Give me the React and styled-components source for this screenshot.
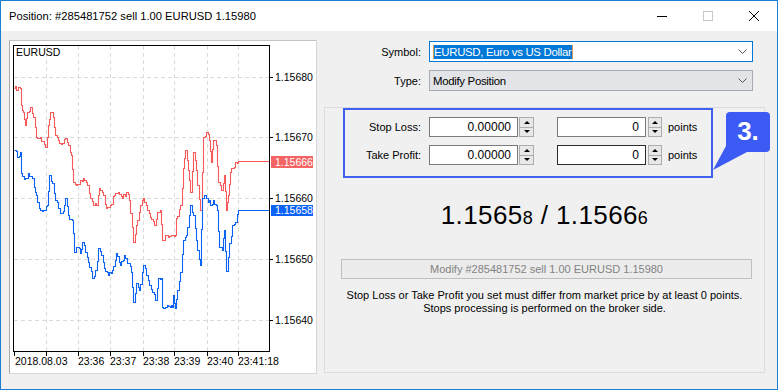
import React from "react";
import styled, { createGlobalStyle } from "styled-components";

const GlobalStyle = createGlobalStyle`
  html, body {
    margin: 0;
    padding: 0;
    background: #fff;
  }
  body {
    font-family: "Liberation Sans", Arial, sans-serif;
    font-size: 11px;
    color: #000;
    overflow: hidden;
  }
  * {
    box-sizing: border-box;
  }
`;

const Window = styled.div`
  width: 778px;
  height: 390px;
  border: 1px solid #1a7fd4;
  background: #f0f0f0;
  display: flex;
  flex-direction: column;
`;

const TitleBar = styled.div`
  height: 30px;
  background: #fff;
  display: flex;
  align-items: center;
  flex-shrink: 0;
`;

const Caption = styled.span`
  padding-left: 8px;
  font-size: 11.2px;
  color: #000;
`;

const CaptionButtons = styled.div`
  margin-left: auto;
  display: flex;
  height: 100%;
`;

const CaptionButton = styled.div`
  width: 46px;
  height: 30px;
  display: flex;
  align-items: center;
  justify-content: center;
`;

const Body = styled.div`
  flex: 1;
  display: flex;
  padding: 9px 12px 0 8px;
`;

const ChartPanel = styled.div`
  width: 308px;
  height: 334px;
  background: #fff;
  border: 1px solid #d6d6d6;
  border-left-color: #a8a8a8;
  border-top-color: #c4c4c4;
`;

const ChartSvg = styled.svg`
  display: block;
  text {
    font-family: "Liberation Sans", Arial, sans-serif;
    font-size: 10.5px;
  }
`;

const RightCol = styled.div`
  width: 441px;
  margin-left: 7px;
  display: flex;
  flex-direction: column;
`;

const TopRow = styled.div`
  display: flex;
  align-items: center;
  height: 21px;
  margin-top: ${(p) => p.$mt}px;
`;

const RowLabel = styled.div`
  width: ${(p) => p.$w}px;
  margin-right: 8px;
  text-align: right;
  flex-shrink: 0;
`;

const Combo = styled.div`
  width: 324px;
  height: 21px;
  display: flex;
  align-items: center;
  padding-left: ${(p) => (p.$focused ? 4 : 3)}px;
  padding-right: 5px;
  border: 1px solid ${(p) => (p.$focused ? "#0078d7" : "#a4abb3")};
  background: ${(p) => (p.$focused ? "#fff" : "#e2e4e7")};
  font-size: 11.4px;
  letter-spacing: -0.3px;
`;

const Selected = styled.span`
  background: #0078d7;
  color: #fff;
  line-height: 14px;
  padding: 0 1px 0 0;
  box-shadow: -1px 0 0 #d99a55, 1px 0 0 #d99a55;
`;

const Chevron = styled.svg`
  margin-left: auto;
  display: block;
`;

const Group = styled.div`
  position: relative;
  margin-top: 16px;
  height: 266px;
  border: 1px solid #dcdcdc;
  padding-top: 9px;
  display: flex;
  flex-direction: column;
`;

const FieldRow = styled.div`
  display: flex;
  align-items: center;
  height: 20px;
  margin-bottom: 8px;
`;

const TextInput = styled.div`
  width: 89px;
  height: 20px;
  margin-left: ${(p) => p.$ml || 0}px;
  border: 1px solid ${(p) => (p.$focused ? "#2a2a2a" : "#7a7a7a")};
  background: #fff;
  display: flex;
  align-items: center;
  justify-content: flex-end;
  padding-right: 6px;
  font-size: 12px;
`;

const Spin = styled.div`
  width: ${(p) => p.$w}px;
  height: 20px;
  margin-left: ${(p) => p.$ml}px;
  border: 1px solid #adadad;
  background: #e8e8e8;
  display: flex;
  flex-direction: column;
`;

const SpinHalf = styled.div`
  flex: 1;
  display: flex;
  align-items: center;
  justify-content: center;
  border-top: ${(p) => (p.$down ? "1px solid #adadad" : "none")};

  &::after {
    content: "";
    border-left: 3px solid transparent;
    border-right: 3px solid transparent;
    ${(p) =>
      p.$down ? "border-top: 3px solid #000;" : "border-bottom: 3px solid #000;"}
  }
`;

const Unit = styled.span`
  margin-left: 6px;
`;

const Price = styled.div`
  margin-top: 27px;
  text-align: center;
  font-size: 26px;
  line-height: 30px;
  letter-spacing: 0.4px;
  color: #000;
`;

const Small = styled.span`
  font-size: 18px;
`;

const ActionButton = styled.div`
  margin: 26px 12px 0 16px;
  height: 20px;
  border: 1px solid #bfbfbf;
  background: #ececec;
  color: #838383;
  display: flex;
  align-items: center;
  justify-content: center;
`;

const Note = styled.div`
  margin-top: 10px;
  text-align: center;
  line-height: 13px;
`;

const Highlight = styled.div`
  position: absolute;
  left: 18px;
  top: 0;
  width: 370px;
  height: 70px;
  border: 2px solid #4060f0;
  pointer-events: none;
`;

const Badge = styled.div`
  position: absolute;
  left: 401px;
  top: 4px;
  width: 44px;
  height: 40px;
  border-radius: 4px;
  background: #3c5bf4;
  color: #fff;
  font-family: "Liberation Sans", Arial, sans-serif;
  font-weight: bold;
  font-size: 26px;
  display: flex;
  align-items: center;
  justify-content: center;
  padding-bottom: 2px;
`;

const Tail = styled.svg`
  position: absolute;
  left: 386px;
  top: 36px;
`;

const blueKeys = [
  [14, 150], [17, 157], [20, 152], [21, 173], [25, 178], [28, 173], [33, 178], [35, 192],
  [37, 202], [40, 210], [43, 210], [47, 205], [49, 175], [52, 183], [55, 200], [58, 208],
  [61, 213], [64, 205], [65, 198], [68, 215], [72, 220], [73, 233], [74, 252], [77, 247],
  [80, 253], [82, 242], [85, 252], [88, 262], [92, 278], [95, 270], [98, 248], [101, 255],
  [104, 268], [108, 275], [112, 270], [116, 253], [120, 265], [124, 255], [128, 263],
  [131, 272], [133, 302], [136, 283], [139, 290], [143, 265], [146, 275], [149, 285],
  [152, 292], [155, 300], [158, 278], [161, 278], [162, 307], [167, 305], [172, 307],
  [173, 295], [175, 308], [177, 290], [180, 272], [183, 240], [186, 235], [190, 205],
  [193, 215], [196, 240], [200, 265], [202, 198], [205, 195], [210, 205], [213, 200],
  [217, 210], [219, 247], [222, 250], [224, 230], [226, 271], [229, 243], [232, 225],
  [235, 222], [238, 210], [269, 210],
];

const redKeys = [
  [14, 88], [20, 88], [21, 105], [23, 112], [25, 125], [27, 112], [30, 107], [33, 117],
  [36, 137], [40, 137], [45, 147], [48, 125], [50, 112], [53, 117], [55, 135], [58, 140],
  [62, 143], [65, 138], [68, 145], [71, 155], [73, 182], [76, 185], [80, 180], [83, 178],
  [87, 185], [90, 198], [93, 205], [96, 205], [99, 188], [103, 195], [106, 208], [110, 205],
  [114, 195], [118, 192], [122, 198], [126, 192], [129, 200], [133, 242], [136, 225],
  [140, 205], [143, 198], [147, 210], [150, 217], [154, 225], [157, 212], [160, 210],
  [162, 240], [165, 235], [175, 235], [176, 218], [180, 205], [183, 168], [185, 150],
  [188, 170], [190, 192], [193, 152], [196, 170], [200, 210], [203, 137], [206, 132],
  [209, 140], [211, 162], [213, 140], [216, 145], [218, 182], [221, 190], [224, 175],
  [226, 210], [228, 195], [230, 172], [232, 168], [235, 162], [238, 161], [269, 161],
];

// tick-by-tick step line through the key points, with a little noise
const stepPath = (pts, seed) => {
  let s = seed;
  const rnd = () => {
    s = (s * 16807) % 2147483647;
    return s / 2147483647;
  };
  let d = `M${pts[0][0] + 0.5} ${pts[0][1] + 0.5}`;
  for (let i = 1; i < pts.length; i++) {
    const [x0, y0] = pts[i - 1];
    const [x1, y1] = pts[i];
    const len = x1 - x0;
    if (len > 12) {
      d += ` H${x1 + 0.5} V${y1 + 0.5}`;
      continue;
    }
    const n = Math.max(1, Math.round(len / 1.3));
    for (let k = 1; k <= n; k++) {
      const t = k / n;
      const x = Math.round(x0 + len * t);
      let y = y0 + (y1 - y0) * t;
      if (k < n) y += (rnd() - 0.5) * 5;
      d += ` H${x + 0.5} V${Math.round(y) + 0.5}`;
    }
  }
  return d;
};

const priceLevels = [
  { y: 77, label: "1.15680" },
  { y: 137, label: "1.15670" },
  { y: 198, label: "1.15660" },
  { y: 259, label: "1.15650" },
  { y: 320, label: "1.15640" },
];

const timeTicks = [
  { x: 14, label: "2018.08.03", grid: false },
  { x: 46, label: "", grid: true },
  { x: 78, label: "23:36", grid: true },
  { x: 110, label: "23:37", grid: true },
  { x: 143, label: "23:38", grid: true },
  { x: 174, label: "23:39", grid: true },
  { x: 207, label: "23:40", grid: true },
  { x: 238, label: "23:41:18", grid: true },
];

const Chart = () => (
  <ChartSvg width="306" height="332" viewBox="10 41 306 332">
    {priceLevels.map((p) => (
      <line key={p.y} x1="14" x2="269" y1={p.y + 0.5} y2={p.y + 0.5}
        stroke="#dadada" strokeDasharray="4 3" shapeRendering="crispEdges" />
    ))}
    {timeTicks.filter((t) => t.grid).map((t) => (
      <line key={t.x} x1={t.x + 0.5} x2={t.x + 0.5} y1="46" y2="351"
        stroke="#dadada" strokeDasharray="4 3" shapeRendering="crispEdges" />
    ))}
    <path d={stepPath(redKeys, 7)} fill="none" stroke="#f85a5a" strokeWidth="1.1" />
    <path d={stepPath(blueKeys, 13)} fill="none" stroke="#0a63f5" strokeWidth="1.1" />
    <rect x="13.5" y="45.5" width="256" height="306" fill="none" stroke="#000" shapeRendering="crispEdges" />
    {priceLevels.map((p) => (
      <g key={p.label}>
        <line x1="270" x2="273" y1={p.y + 0.5} y2={p.y + 0.5} stroke="#000" shapeRendering="crispEdges" />
        <text x="275" y={p.y + 4} fill="#000">{p.label}</text>
      </g>
    ))}
    {timeTicks.map((t) => (
      <g key={`t${t.x}`}>
        <line x1={t.x + 0.5} x2={t.x + 0.5} y1="352" y2="356" stroke="#000" shapeRendering="crispEdges" />
        {t.label && (
          <text x={t.x === 14 ? 15 : t.x} y="365" fill="#000">{t.label}</text>
        )}
      </g>
    ))}
    <rect x="271" y="156" width="42" height="12" fill="#f46464" />
    <text x="275" y="165.5" fill="#fff">1.15666</text>
    <rect x="271" y="205" width="42" height="11" fill="#0a63f5" />
    <text x="275" y="214" fill="#fff">1.15658</text>
    <text x="16" y="56" fill="#000">EURUSD</text>
  </ChartSvg>
);

const SpinBox = ({ w, ml }) => (
  <Spin $w={w} $ml={ml}>
    <SpinHalf />
    <SpinHalf $down />
  </Spin>
);

const App = () => (
  <>
    <GlobalStyle />
    <Window>
      <TitleBar>
        <Caption>Position: #285481752 sell 1.00 EURUSD 1.15980</Caption>
        <CaptionButtons>
          <CaptionButton>
            <svg width="10" height="10" viewBox="0 0 10 10">
              <line x1="0" x2="10" y1="5.5" y2="5.5" stroke="#000" />
            </svg>
          </CaptionButton>
          <CaptionButton>
            <svg width="10" height="10" viewBox="0 0 10 10">
              <rect x="0.5" y="0.5" width="9" height="9" fill="none" stroke="#c8c8c8" />
            </svg>
          </CaptionButton>
          <CaptionButton>
            <svg width="10" height="10" viewBox="0 0 10 10">
              <path d="M0 0 L10 10 M10 0 L0 10" stroke="#000" strokeWidth="1" />
            </svg>
          </CaptionButton>
        </CaptionButtons>
      </TitleBar>
      <Body>
        <ChartPanel>
          <Chart />
        </ChartPanel>
        <RightCol>
          <TopRow $mt={1}>
            <RowLabel $w={97}>Symbol:</RowLabel>
            <Combo $focused>
              <Selected>EURUSD, Euro vs US Dollar</Selected>
              <Chevron width="9" height="5" viewBox="0 0 9 5">
                <polyline points="0.5,0.5 4.5,4.5 8.5,0.5" fill="none" stroke="#555" />
              </Chevron>
            </Combo>
          </TopRow>
          <TopRow $mt={8}>
            <RowLabel $w={97}>Type:</RowLabel>
            <Combo>
              <span>Modify Position</span>
              <Chevron width="9" height="5" viewBox="0 0 9 5">
                <polyline points="0.5,0.5 4.5,4.5 8.5,0.5" fill="none" stroke="#555" />
              </Chevron>
            </Combo>
          </TopRow>
          <Group>
            <FieldRow>
              <RowLabel $w={96}>Stop Loss:</RowLabel>
              <TextInput>0.00000</TextInput>
              <SpinBox w={15} ml={1} />
              <TextInput $ml={23}>0</TextInput>
              <SpinBox w={14} ml={2} />
              <Unit>points</Unit>
            </FieldRow>
            <FieldRow>
              <RowLabel $w={96}>Take Profit:</RowLabel>
              <TextInput>0.00000</TextInput>
              <SpinBox w={15} ml={1} />
              <TextInput $ml={23} $focused>0</TextInput>
              <SpinBox w={14} ml={2} />
              <Unit>points</Unit>
            </FieldRow>
            <Price>
              1.1565<Small>8</Small> / 1.1566<Small>6</Small>
            </Price>
            <ActionButton>Modify #285481752 sell 1.00 EURUSD 1.15980</ActionButton>
            <Note>
              Stop Loss or Take Profit you set must differ from market price by at least 0 points.
              <br />
              Stops processing is performed on the broker side.
            </Note>
            <Highlight />
            <Badge>3.</Badge>
            <Tail width="40" height="30" viewBox="0 0 40 30">
              <polygon points="15,2 36,8 2,26" fill="#3c5bf4" />
            </Tail>
          </Group>
        </RightCol>
      </Body>
    </Window>
  </>
);

export default App;
